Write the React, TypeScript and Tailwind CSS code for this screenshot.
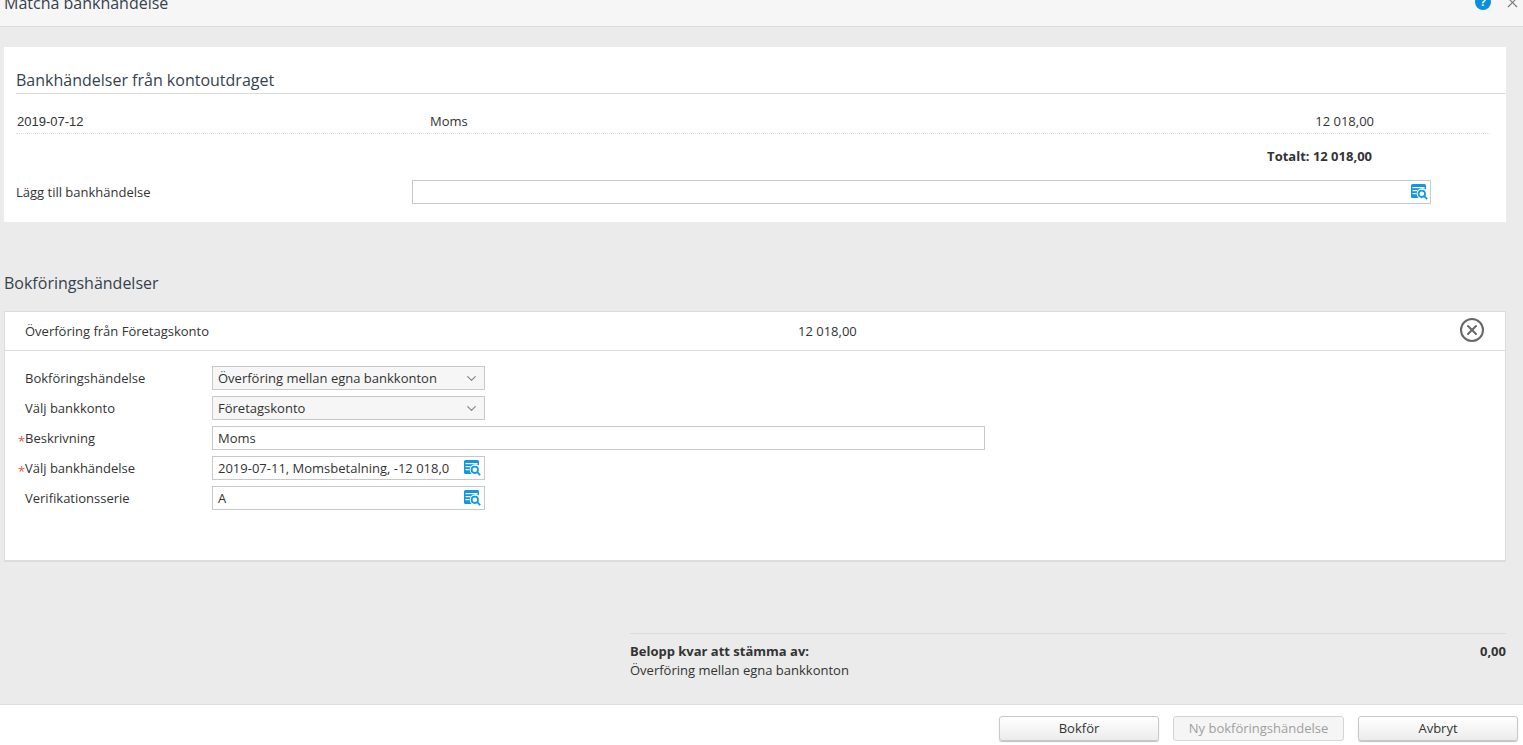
import { ChevronDown, X } from "lucide-react";

const LookupIcon = () => (
  <svg width="17" height="16" viewBox="0 0 17 16" aria-hidden="true" className="shrink-0">
    <path
      d="M1.5 0h12A1.5 1.5 0 0 1 15 1.5V5.600A5.500 5.500 0 0 0 7.600 14H1.500A1.500 1.500 0 0 1 0 12.500V1.500A1.500 1.500 0 0 1 1.500 0Z"
      fill="#1296e0"
    />
    <rect x="1.500" y="3" width="12" height="1.200" fill="#fff" />
    <rect x="1.500" y="6" width="5" height="1.200" fill="#fff" />
    <rect x="1.500" y="9" width="4" height="1.200" fill="#fff" />
    <circle cx="10.800" cy="9.800" r="3.200" fill="none" stroke="#1296e0" strokeWidth="1.800" />
    <path d="M13.200 12.200l3 3" stroke="#1296e0" strokeWidth="1.800" />
  </svg>
);

const Select = ({ value }: { value: string }) => (
  <div className="flex h-6 w-[273px] items-center justify-between border border-[#c8c8c8] bg-[#f6f6f6] pl-[5px] pr-[5px]">
    <span className="pt-[1px]">{value}</span>
    <ChevronDown size={15} strokeWidth={2} className="text-[#888]" />
  </div>
);

const LookupInput = ({ value }: { value: string }) => (
  <div className="flex h-6 w-[273px] items-center justify-between border border-[#c8c8c8] bg-white pl-[5px] pr-[3px]">
    <span className="whitespace-nowrap pt-[1px]">{value}</span>
    <LookupIcon />
  </div>
);

const FormRow = ({ label, required, children }: { label: string; required?: boolean; children: React.ReactNode }) => (
  <div className="flex h-6 items-center">
    <div className="relative w-[207px] pl-[20px] pt-[1px]">
      {required && <span className="absolute left-[13px] top-[4px] text-[#e0574a]">*</span>}
      {label}
    </div>
    {children}
  </div>
);

export default function App() {
  return (
    <div className="flex h-[745px] w-[1523px] flex-col overflow-hidden bg-[#ebebeb] font-['Open_Sans',sans-serif] text-[13px] text-[#333]">
      {/* Header */}
      <header className="flex h-[27px] shrink-0 items-start justify-between border-b border-[#dcdcdc] bg-[#f6f6f6] pl-[4px] pr-[2px]">
        <h1 className="-mt-[8px] text-[16px] leading-[22px] text-[#36424e]">Matcha bankhändelse</h1>
        <div className="flex items-start gap-[13px]">
          <span className="-mt-[6px] flex h-4 w-4 items-center justify-center rounded-full bg-[#0a8fdc] text-[11px] font-bold leading-4 text-white">?</span>
          <X size={17} strokeWidth={1.5} className="-mt-[6px] text-[#777]" />
        </div>
      </header>

      {/* Bank events */}
      <section className="ml-[4px] mt-[20px] h-[175px] w-[1502px] shrink-0 bg-white pt-[22px]">
        <h2 className="ml-[12px] border-b border-[#dcdcdc] pb-[2px] text-[16px] leading-[22px] text-[#36424e]">Bankhändelser från kontoutdraget</h2>
        <div className="ml-[12px] mr-[16px] mt-[15px] flex h-[25px] items-start border-b border-dotted border-[#dcdcdc] leading-[24px]">
          <span className="ml-[1px] w-[413px] pt-[1px] font-['Liberation_Sans',sans-serif]">2019-07-12</span>
          <span>Moms</span>
          <span className="ml-auto mr-[116px]">12 018,00</span>
        </div>
        <div className="mr-[134px] mt-[13px] text-right font-bold leading-[18px]">Totalt: 12 018,00</div>
        <div className="mt-[15px] flex items-center pl-[12px]">
          <span className="w-[396px] pt-[1px]">Lägg till bankhändelse</span>
          <div className="flex h-6 w-[1019px] items-center justify-end border border-[#c8c8c8] pr-[2px]">
            <LookupIcon />
          </div>
        </div>
      </section>

      {/* Accounting events */}
      <h2 className="ml-[4px] mt-[50px] shrink-0 text-[16px] leading-[22px] text-[#36424e]">Bokföringshändelser</h2>
      <section className="ml-[4px] mt-[17px] h-[251px] w-[1502px] shrink-0 border border-b-2 border-[#dcdcdc] bg-white">
        <div className="flex h-[39px] items-center border-b border-[#dcdcdc] pl-[20px] pr-[21px]">
          <span className="w-[773px] pt-[1px]">Överföring från Företagskonto</span>
          <span className="pt-[1px]">12 018,00</span>
          <span className="ml-auto -mt-[2px] flex h-6 w-6 items-center justify-center rounded-full border-2 border-[#666]">
            <X size={16} strokeWidth={3} className="text-[#666]" />
          </span>
        </div>
        <div className="mt-[15px] flex flex-col gap-[6px]">
          <FormRow label="Bokföringshändelse">
            <Select value="Överföring mellan egna bankkonton" />
          </FormRow>
          <FormRow label="Välj bankkonto">
            <Select value="Företagskonto" />
          </FormRow>
          <FormRow label="Beskrivning" required>
            <div className="flex h-6 w-[773px] items-center border border-[#c8c8c8] bg-white pl-[5px] pt-[1px]">Moms</div>
          </FormRow>
          <FormRow label="Välj bankhändelse" required>
            <LookupInput value="2019-07-11, Momsbetalning, -12 018,0" />
          </FormRow>
          <FormRow label="Verifikationsserie">
            <LookupInput value="A" />
          </FormRow>
        </div>
      </section>

      {/* Summary */}
      <div className="ml-[630px] mt-[71px] h-[71px] w-[876px] shrink-0 border-t border-[#dcdcdc] pt-[8px] leading-[19px]">
        <div className="flex justify-between font-bold">
          <span>Belopp kvar att stämma av:</span>
          <span>0,00</span>
        </div>
        <div>Överföring mellan egna bankkonton</div>
      </div>

      {/* Footer */}
      <footer className="flex flex-1 items-start justify-end gap-[14px] border-t border-[#dcdcdc] bg-white pr-[5px] pt-[11px]">
        <button className="h-[25px] w-[160px] rounded-[3px] border border-[#c8c8c8] bg-gradient-to-b from-white to-[#ececec] shadow-[0_1px_1px_rgba(0,0,0,0.25)]">Bokför</button>
        <button className="h-[25px] w-[171px] rounded-[3px] border border-[#d4d4d4] bg-[#f5f5f5] text-[#a0a0a0]">Ny bokföringshändelse</button>
        <button className="h-[25px] w-[160px] rounded-[3px] border border-[#c8c8c8] bg-gradient-to-b from-white to-[#ececec] shadow-[0_1px_1px_rgba(0,0,0,0.25)]">Avbryt</button>
      </footer>
    </div>
  );
}
